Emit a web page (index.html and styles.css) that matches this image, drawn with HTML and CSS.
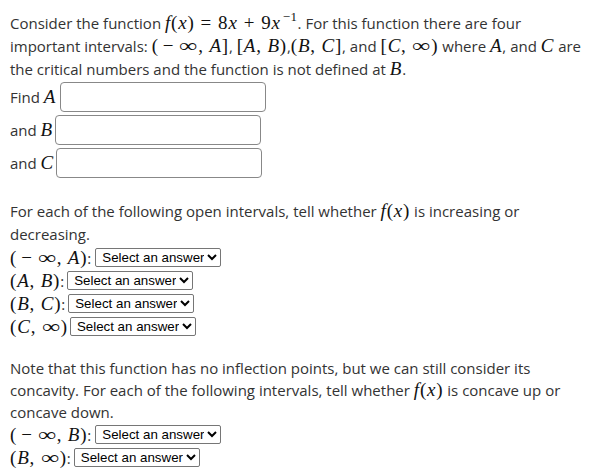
FILE: index.html
```html
<!DOCTYPE html>
<html lang="en">
<head>
  <meta charset="UTF-8">
  <title>Question</title>
  <link rel="stylesheet" href="styles.css">
</head>
<body>

<div class="question">
  <p>Consider the function <span class="m"><i>f</i>(<i>x</i>)<b>=</b>8<i>x</i><b>+</b>9<i>x</i><sup>&minus;1</sup></span>. For this function there are four important intervals: <span class="m">(<u>&minus;</u><s>&infin;</s>, <i>A</i>]</span>, <span class="m">[<i>A</i>, <i>B</i>)</span>,<span class="m">(<i>B</i>, <i>C</i>]</span>, and <span class="m">[<i>C</i>, <s>&infin;</s>)</span> where <span class="m"><i>A</i></span>, and <span class="m"><i>C</i></span> are the critical numbers and the function is not defined at <span class="m"><i>B</i></span>.</p>

  <div class="ans first"><span>Find <span class="m"><i>A</i></span></span><input type="text"></div>
  <div class="ans"><span>and <span class="m"><i>B</i></span></span><input type="text"></div>
  <div class="ans"><span>and <span class="m"><i>C</i></span></span><input type="text"></div>

  <p class="gap">For each of the following open intervals, tell whether <span class="m"><i>f</i>(<i>x</i>)</span> is increasing or decreasing.</p>
  <div class="row"><span class="m">(<u>&minus;</u><s>&infin;</s>, <i>A</i>)</span>:<select class="wide"><option>Select an answer</option></select></div>
  <div class="row"><span class="m">(<i>A</i>, <i>B</i>)</span>:<select><option>Select an answer</option></select></div>
  <div class="row"><span class="m">(<i>B</i>, <i>C</i>)</span>:<select><option>Select an answer</option></select></div>
  <div class="row"><span class="m">(<i>C</i>, <s>&infin;</s>)</span><select class="nocolon"><option>Select an answer</option></select></div>

  <p class="gap2">Note that this function has no inflection points, but we can still consider its concavity. For each of the following intervals, tell whether <span class="m"><i>f</i>(<i>x</i>)</span> is concave up or concave down.</p>
  <div class="row"><span class="m">(<u>&minus;</u><s>&infin;</s>, <i>B</i>)</span>:<select class="wide"><option>Select an answer</option></select></div>
  <div class="row"><span class="m">(<i>B</i>, <s>&infin;</s>)</span>:<select><option>Select an answer</option></select></div>
</div>

</body>
</html>
```

FILE: styles.css
```css
body {
  margin: 0;
  padding: 12px 10px;
  font-family: "Open Sans", Arial, sans-serif;
  font-size: 15px;
  color: #333;
  background: #fff;
}
.question {
  width: 578px;
}
p {
  margin: 0;
  line-height: 23px;
}
.m {
  font-family: "Liberation Serif", "DejaVu Serif", serif;
  font-size: 19px;
  letter-spacing: 0.8px;
  line-height: 1;
  color: #111;
}
.m b {
  font-weight: normal;
  margin: 0 6px;
}
.m u {
  text-decoration: none;
  margin: 0 5px 0 4px;
}
.m s {
  text-decoration: none;
  display: inline-block;
  width: 19px;
  text-align: center;
  transform: scaleX(1.35);
}
.m sup {
  font-size: 13px;
  line-height: 0;
  letter-spacing: 0.5px;
  vertical-align: 8px;
  margin-left: 2px;
}
.ans {
  display: flex;
  align-items: center;
  gap: 2px;
  margin-top: 3px;
}
.ans.first {
  margin-top: 1px;
  gap: 4px;
}
.ans input {
  box-sizing: border-box;
  width: 206px;
  height: 30px;
  margin: 0;
  border: 1px solid #888;
  border-radius: 4px;
  padding: 2px 4px;
}
.gap {
  margin-top: 22px;
}
.gap2 {
  margin-top: 19px;
  line-height: 22px;
}
.row {
  height: 23px;
  display: flex;
  align-items: center;
}
.row select {
  box-sizing: border-box;
  width: 126px;
  font-family: "Liberation Sans", Arial, sans-serif;
  font-size: 13.33px;
  height: 19px;
  margin-left: 3px;
  padding: 0 0 0 2px;
  border: 1px solid #767676;
  border-radius: 2px;
  background: #fff;
  color: #000;
}
.row select.wide {
  margin-left: 4px;
}
.row select.nocolon {
  margin-left: 2px;
}
```
